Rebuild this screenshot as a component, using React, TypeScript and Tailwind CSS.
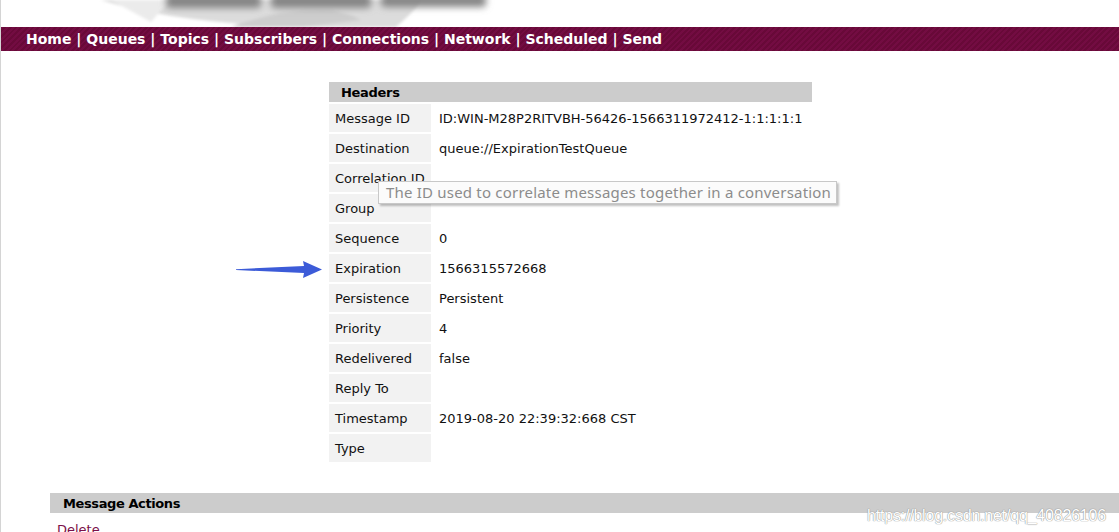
import React from "react";

const rows: [string, string][] = [
  ["Message ID", "ID:WIN-M28P2RITVBH-56426-1566311972412-1:1:1:1:1"],
  ["Destination", "queue://ExpirationTestQueue"],
  ["Correlation ID", ""],
  ["Group", ""],
  ["Sequence", "0"],
  ["Expiration", "1566315572668"],
  ["Persistence", "Persistent"],
  ["Priority", "4"],
  ["Redelivered", "false"],
  ["Reply To", ""],
  ["Timestamp", "2019-08-20 22:39:32:668 CST"],
  ["Type", ""],
];

const navItems = ["Home", "Queues", "Topics", "Subscribers", "Connections", "Network", "Scheduled", "Send"];

function Logo() {
  return (
    <svg width="560" height="27" viewBox="0 0 560 27" className="block">
      <defs>
        <filter id="b1" x="-20%" y="-80%" width="140%" height="260%">
          <feGaussianBlur stdDeviation="3.5" />
        </filter>
        <filter id="b2" x="-20%" y="-50%" width="140%" height="200%">
          <feGaussianBlur stdDeviation="1.5" />
        </filter>
      </defs>
      <g filter="url(#b2)">
        <path d="M100 0 L420 0 Q415 10 395 27 L290 27 Q170 22 100 0 Z" fill="#dcdcdc" />
        <path d="M230 27 Q280 8 330 10 Q350 14 360 20 Q330 24 300 27 Z" fill="#cdcdcd" />
        <path d="M110 0 L170 0 Q160 10 150 22 Z" fill="#ebebeb" />
      </g>
      <g filter="url(#b1)" fill="#858585">
        <rect x="165" y="-6" width="95" height="14" rx="4" />
        <rect x="270" y="-6" width="100" height="14" rx="4" />
        <rect x="380" y="-6" width="105" height="13" rx="4" />
      </g>
    </svg>
  );
}

export default function App() {
  return (
    <div
      className="relative min-h-[532px] w-[1119px] overflow-hidden bg-white border-l border-[#d4d4d4]"
      style={{ fontFamily: '"DejaVu Sans", Verdana, sans-serif' }}
    >
      <div className="h-[27px] overflow-hidden">
        <Logo />
      </div>
      <div className="h-[24px] flex items-center pl-[25px] bg-[repeating-linear-gradient(135deg,#730c42_0px,#730c42_2px,#680938_2px,#680938_4px)]">
        <div className="text-white font-bold text-[14px] leading-none whitespace-nowrap">
          {navItems.map((n, i) => (
            <span key={n}>
              {n}
              {i < navItems.length - 1 ? " | " : ""}
            </span>
          ))}
        </div>
      </div>

      <div className="ml-[328px] mt-[31px] w-[483px] relative">
        <div className="h-[20px] bg-[#cccccc] flex items-center pl-[12px] pt-[1px] text-[13px] font-bold text-black tracking-[-0.3px]">
          Headers
        </div>
        <div className="mt-[2px] grid grid-cols-[102px_1fr] gap-[2px] auto-rows-[28px] text-[13px] text-[#111]">
          {rows.map(([k, v]) => (
            <React.Fragment key={k}>
              <div className="bg-[#f2f2f2] flex items-center pl-[6px] pt-[2px] whitespace-nowrap">{k}</div>
              <div className="flex items-center pl-[6px] pt-[2px] whitespace-nowrap">{v}</div>
            </React.Fragment>
          ))}
        </div>
      </div>

      <div className="ml-[49px] mt-[31px] h-[20px] bg-[#cccccc] flex items-center pl-[13px] pt-[1px] text-[13px] font-bold text-black tracking-[-0.4px]">
        Message Actions
      </div>
      <div className="ml-[56px] mt-[10px] text-[13px] text-[#7b1049] leading-none">Delete</div>

      {/* tooltip */}
      <div
        className="absolute left-[377px] top-[181px] w-[459px] h-[23px] bg-[#fbfbfb] border border-[#c8c8c8] shadow-[2px_2px_2px_rgba(0,0,0,0.25)] flex items-center pl-[7px] text-[15px] text-[#8c8c8c] whitespace-nowrap tracking-[0.2px]"
        style={{ fontFamily: '"Noto Sans", sans-serif' }}
      >
        The ID used to correlate messages together in a conversation
      </div>

      {/* annotation arrow */}
      <svg className="absolute left-[235px] top-[260px]" width="88" height="20" viewBox="0 0 88 20">
        <path d="M0 9.2 L68 6 L67 1 L86 9.5 L67 18 L68 13 L0 10 Z" fill="#3c5bd8" />
      </svg>

      {/* watermark */}
      <div
        className="absolute left-[866px] top-[504px] text-[16px] text-white whitespace-nowrap tracking-[-0.2px]"
        style={{ fontFamily: '"Liberation Sans", Arial, sans-serif', textShadow: "0 0 1px #8a8a8a, 0 0 1px #8a8a8a" }}
      >
        https://blog.csdn.net/qq_40826106
      </div>
    </div>
  );
}
